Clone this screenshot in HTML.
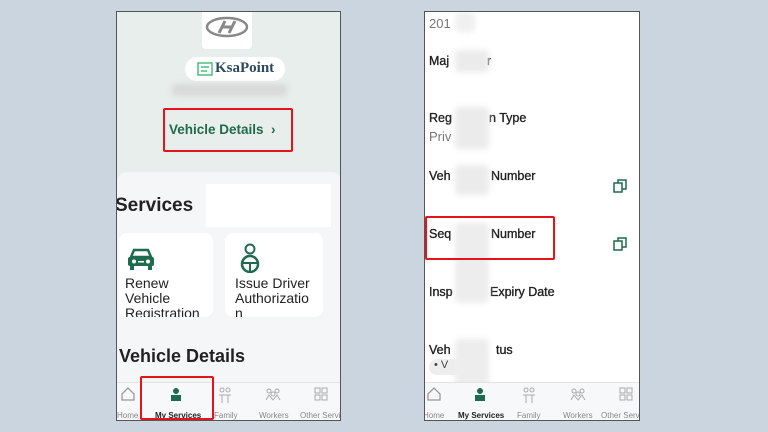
<!DOCTYPE html>
<html><head><meta charset="utf-8"><style>
*{margin:0;padding:0;box-sizing:border-box}
body{width:768px;height:432px;background:#cbd5df;position:relative;overflow:hidden;font-family:"Liberation Sans",Arial,sans-serif}
.ph{position:absolute;top:11px;height:410px;border:1px solid #555;overflow:hidden}
.a{position:absolute}
.red{position:absolute;border:2px solid #e5141b;border-radius:2px}
.blur{position:absolute;background:#d8d8d8;filter:blur(3px);border-radius:4px}
.nav{position:absolute;left:0;right:0;bottom:0;height:38px;background:#f7f8f9;border-top:1px solid #e3e3e3;font-size:8px;color:#888}
.nav div{position:absolute;top:28px;white-space:nowrap}
.nav svg{position:absolute;top:4px}
.lbl{position:absolute;left:4px;font-size:12.5px;color:#222;-webkit-text-stroke:0.35px #222;white-space:nowrap}
.lbl i{display:inline-block;font-style:normal}
</style></head><body>
<!-- LEFT PHONE -->
<div class="ph" style="left:116px;width:225px;background:#e8eeeb">
 <div class="a" style="left:85px;top:0;width:50px;height:37px;background:#fff;border-radius:0 0 4px 4px"></div>
 <svg class="a" style="left:88px;top:4px" width="44" height="22" viewBox="0 0 44 22"><ellipse cx="22" cy="11" rx="20" ry="9" fill="none" stroke="#888" stroke-width="2.5"/><path d="M14 17 L20 5 M24 17 L30 5 M18 11 H26" stroke="#888" stroke-width="3" fill="none"/></svg>
 <div class="a" style="left:68px;top:45px;width:100px;height:24px;background:#fff;border-radius:12px"></div>
 <svg class="a" style="left:80px;top:50px" width="16" height="14"><rect x="1" y="1" width="14" height="12" fill="none" stroke="#4cbf7f" stroke-width="1.5"/><path d="M4 5h8M4 9h6" stroke="#4cbf7f" stroke-width="1.5"/></svg>
 <div class="a" style="left:98px;top:48px;font-family:'Liberation Serif',serif;font-size:15px;color:#2d4a5c;font-weight:bold">KsaPoint</div>
 <div class="blur" style="left:55px;top:72px;width:115px;height:12px"></div>
 <div class="a" style="left:52px;top:110px;font-size:13.5px;font-weight:bold;color:#1f6b4d">Vehicle Details &nbsp;›</div>
 <div class="a" style="left:0;top:160px;width:225px;height:260px;background:#f5f6f8;border-radius:10px 10px 0 0"></div>
 <div class="a" style="left:89px;top:172px;width:125px;height:43px;background:#fff"></div>
 <div class="a" style="left:-2px;top:183px;font-size:19px;font-weight:bold;color:#222">Services</div>
 <div class="a" style="left:2px;top:221px;width:94px;height:84px;background:#fff;border-radius:8px;overflow:hidden">
  <svg class="a" style="left:7px;top:14px" width="30" height="24" viewBox="0 0 30 24"><path d="M5 10 L8 3 H22 L25 10 Z" fill="none" stroke="#1f6b4d" stroke-width="2.5"/><rect x="2" y="10" width="26" height="9" rx="2" fill="#1f6b4d"/><circle cx="8" cy="14.5" r="2" fill="#fff"/><circle cx="22" cy="14.5" r="2" fill="#fff"/><rect x="12" y="14" width="6" height="1.5" fill="#fff"/><rect x="4" y="19" width="4" height="4" fill="#1f6b4d"/><rect x="22" y="19" width="4" height="4" fill="#1f6b4d"/></svg>
  <div class="a" style="left:6px;top:43px;font-size:14px;line-height:15px;color:#222">Renew<br>Vehicle<br>Registration</div>
 </div>
 <div class="a" style="left:108px;top:221px;width:98px;height:84px;background:#fff;border-radius:8px;overflow:hidden">
  <svg class="a" style="left:14px;top:10px" width="22" height="30" viewBox="0 0 22 30"><circle cx="11" cy="6" r="4.5" fill="none" stroke="#1f6b4d" stroke-width="2"/><circle cx="11" cy="21" r="8" fill="none" stroke="#1f6b4d" stroke-width="2.5"/><path d="M4 20h14M11 20v8" stroke="#1f6b4d" stroke-width="2"/></svg>
  <div class="a" style="left:10px;top:43px;font-size:14px;line-height:15px;color:#222">Issue Driver<br>Authorizatio<br>n</div>
 </div>
 <div class="a" style="left:2px;top:334px;font-size:18px;font-weight:bold;color:#222">Vehicle Details</div>
 <div class="nav">
  <svg style="left:4px" width="14" height="14"><path d="M1 7 L7 1 L13 7 V13 H1 Z" fill="none" stroke="#999" stroke-width="1.3"/></svg><div style="left:0">Home</div>
  <svg style="left:52px" width="14" height="14"><circle cx="7" cy="4" r="3" fill="#1f6b4d"/><rect x="2" y="8" width="10" height="6" fill="#1f6b4d"/></svg><div style="left:38px;color:#222;font-weight:bold">My Services</div>
  <svg style="left:100px" width="16" height="16"><circle cx="5" cy="3" r="2" fill="none" stroke="#aaa"/><circle cx="11" cy="3" r="2" fill="none" stroke="#aaa"/><path d="M2 8h12M5 8v8M11 8v8" stroke="#aaa"/></svg><div style="left:97px">Family</div>
  <svg style="left:148px" width="16" height="16"><circle cx="4" cy="4" r="2" fill="none" stroke="#aaa"/><circle cx="12" cy="4" r="2" fill="none" stroke="#aaa"/><circle cx="8" cy="7" r="2" fill="none" stroke="#aaa"/><path d="M1 13 L4 8 L8 13 L12 8 L15 13" fill="none" stroke="#aaa"/></svg><div style="left:142px">Workers</div>
  <svg style="left:197px" width="14" height="14"><rect x="1" y="1" width="5" height="5" fill="none" stroke="#aaa"/><rect x="8" y="1" width="5" height="5" fill="none" stroke="#aaa"/><rect x="1" y="8" width="5" height="5" fill="none" stroke="#aaa"/><rect x="8" y="8" width="5" height="5" fill="none" stroke="#aaa"/></svg><div style="left:183px">Other Services</div>
 </div>
</div>
<div class="red" style="left:163px;top:108px;width:130px;height:44px"></div>
<div class="red" style="left:140px;top:376px;width:74px;height:44px"></div>
<!-- RIGHT PHONE -->
<div class="ph" style="left:424px;width:216px;background:#fff">
 <div class="a" style="left:4px;top:4px;font-size:13px;color:#777">201</div>
 <div class="lbl" style="top:42px"><i style="width:30px">Maj</i><i style="width:28px"></i>r</div>
 <div class="lbl" style="top:99px"><i style="width:30px">Reg</i><i style="width:30px"></i>n Type</div>
 <div class="a" style="left:4px;top:117px;font-size:13px;color:#777">Priv</div>
 <div class="lbl" style="top:157px"><i style="width:30px">Veh</i><i style="width:32px"></i>Number</div>
 <div class="lbl" style="top:215px"><i style="width:30px">Seq</i><i style="width:32px"></i>Number</div>
 <div class="lbl" style="top:273px"><i style="width:30px">Insp</i><i style="width:31px"></i>Expiry Date</div>
 <div class="lbl" style="top:331px"><i style="width:30px">Veh</i><i style="width:37px"></i>tus</div>
 <div class="a" style="left:4px;top:347px;width:40px;height:16px;background:#eee;border-radius:8px;font-size:11px;color:#444;padding-left:5px">• V</div>
 <div class="blur" style="left:30px;top:0;width:20px;height:20px;background:#f0f0f0"></div>
 <div class="blur" style="left:30px;top:38px;width:34px;height:22px;background:#ebebeb"></div>
 <div class="blur" style="left:30px;top:95px;width:34px;height:42px;background:#ebebeb"></div>
 <div class="blur" style="left:30px;top:153px;width:34px;height:30px;background:#ebebeb"></div>
 <div class="blur" style="left:30px;top:211px;width:34px;height:80px;background:#ededed"></div>
 <div class="blur" style="left:30px;top:327px;width:34px;height:56px;background:#ededed"></div>
 <svg class="a" style="left:188px;top:167px" width="14" height="14"><rect x="1" y="4" width="8" height="9" fill="none" stroke="#1f6b4d" stroke-width="1.5"/><path d="M5 4V1h8v9h-4" fill="none" stroke="#1f6b4d" stroke-width="1.5"/></svg>
 <svg class="a" style="left:188px;top:225px" width="14" height="14"><rect x="1" y="4" width="8" height="9" fill="none" stroke="#1f6b4d" stroke-width="1.5"/><path d="M5 4V1h8v9h-4" fill="none" stroke="#1f6b4d" stroke-width="1.5"/></svg>
 <div class="nav">
  <svg style="left:2px" width="14" height="14"><path d="M1 7 L7 1 L13 7 V13 H1 Z" fill="none" stroke="#999" stroke-width="1.3"/></svg><div style="left:-2px">Home</div>
  <svg style="left:48px" width="14" height="14"><circle cx="7" cy="4" r="3" fill="#1f6b4d"/><rect x="2" y="8" width="10" height="6" fill="#1f6b4d"/></svg><div style="left:33px;color:#222;font-weight:bold">My Services</div>
  <svg style="left:96px" width="16" height="16"><circle cx="5" cy="3" r="2" fill="none" stroke="#aaa"/><circle cx="11" cy="3" r="2" fill="none" stroke="#aaa"/><path d="M2 8h12M5 8v8M11 8v8" stroke="#aaa"/></svg><div style="left:92px">Family</div>
  <svg style="left:145px" width="16" height="16"><circle cx="4" cy="4" r="2" fill="none" stroke="#aaa"/><circle cx="12" cy="4" r="2" fill="none" stroke="#aaa"/><circle cx="8" cy="7" r="2" fill="none" stroke="#aaa"/><path d="M1 13 L4 8 L8 13 L12 8 L15 13" fill="none" stroke="#aaa"/></svg><div style="left:138px">Workers</div>
  <svg style="left:194px" width="14" height="14"><rect x="1" y="1" width="5" height="5" fill="none" stroke="#aaa"/><rect x="8" y="1" width="5" height="5" fill="none" stroke="#aaa"/><rect x="1" y="8" width="5" height="5" fill="none" stroke="#aaa"/><rect x="8" y="8" width="5" height="5" fill="none" stroke="#aaa"/></svg><div style="left:176px">Other Services</div>
 </div>
</div>
<div class="red" style="left:425px;top:216px;width:130px;height:44px"></div>
</body></html>
